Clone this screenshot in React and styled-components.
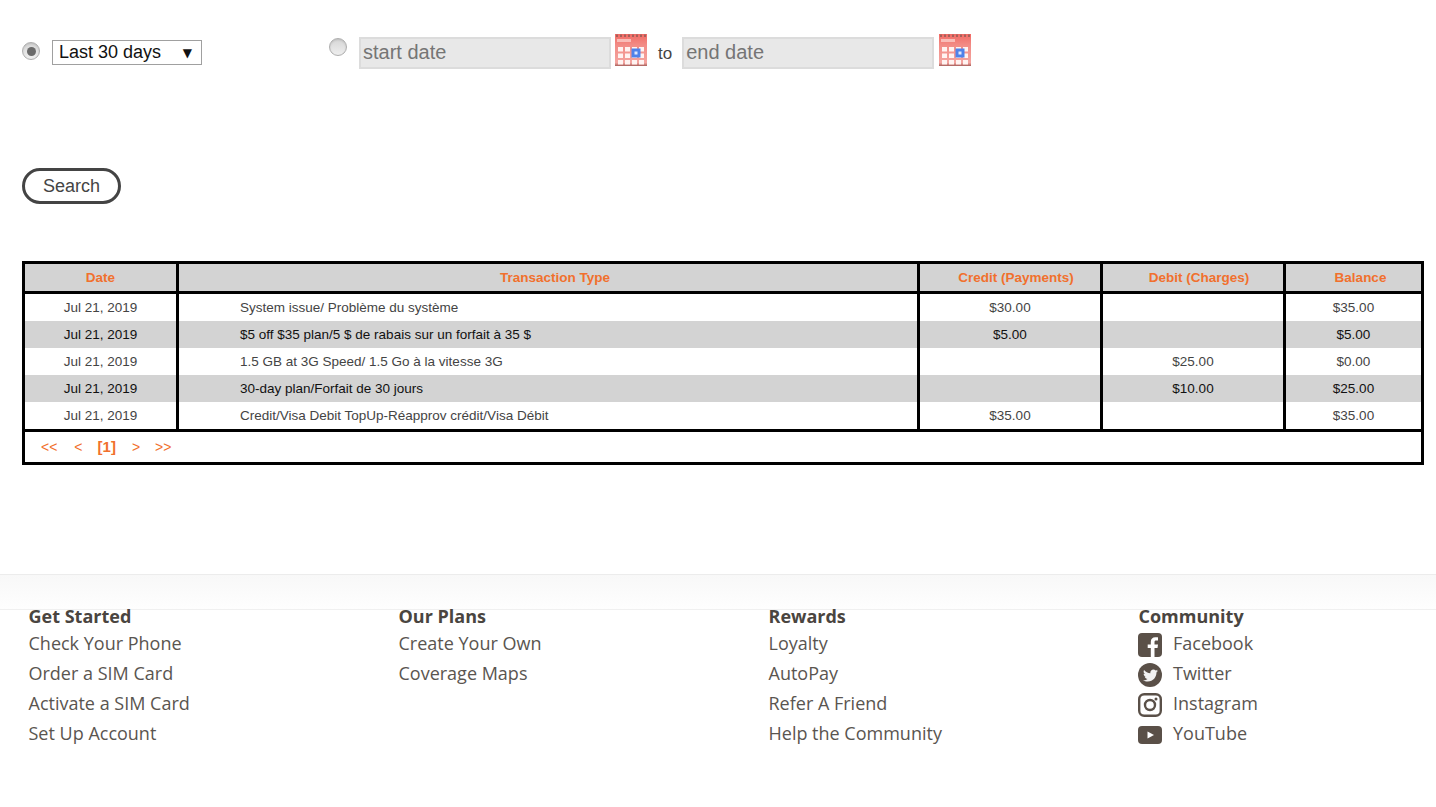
import React from 'react';
import styled, { createGlobalStyle } from 'styled-components';
import { FaTwitter } from 'react-icons/fa';

const Global = createGlobalStyle`
  html, body { margin: 0; padding: 0; background: #fff; }
  body { font-family: "Liberation Sans", Arial, sans-serif; }
`;

const Page = styled.div`
  width: 1436px;
  height: 807px;
  overflow: hidden;
`;
const Content = styled.main`
  height: 574px;
  padding: 34px 12px 0 22px;
  box-sizing: border-box;
`;
const FilterRow = styled.div`
  display: flex;
  align-items: flex-start;
  height: 134px;
`;
const Radio = styled.span`
  width: 18px;
  height: 18px;
  box-sizing: border-box;
  border-radius: 50%;
  border: 1px solid #aeaeae;
  background: linear-gradient(#d6d6d6, #eeeeee);
  box-shadow: inset 0 1px 2px rgba(0, 0, 0, 0.12);
  margin-top: ${p => p.$top}px;
  margin-right: ${p => p.$right}px;
  display: flex;
  align-items: center;
  justify-content: center;
  flex: none;
  &::after {
    content: '';
    display: ${p => (p.$checked ? 'block' : 'none')};
    width: 9px;
    height: 9px;
    border-radius: 50%;
    background: #6a6a6a;
  }
`;
const Select = styled.div`
  width: 150px;
  height: 25px;
  box-sizing: border-box;
  margin-top: 6px;
  margin-right: 127px;
  border: 1px solid #a0a0a0;
  padding: 0 9px 0 6px;
  display: flex;
  align-items: center;
  justify-content: space-between;
  font-size: 18px;
  color: #111;
`;
const Arrow = styled.span`
  font-family: "DejaVu Sans", sans-serif;
  font-size: 12px;
  color: #111;
`;
const DateInput = styled.div`
  width: 252px;
  height: 32px;
  box-sizing: border-box;
  margin-top: 3px;
  border: 2px solid #dcdcdc;
  background: #e8e8e8;
  padding: 0 0 2px 2px;
  display: flex;
  align-items: center;
  font-size: 20px;
  color: #757575;
`;
const To = styled.span`
  font-size: 17px;
  color: #444;
  margin: 10px 10px 0 11px;
  line-height: 20px;
`;
const CalendarSvg = styled.svg`
  display: block;
  flex: none;
  width: 32px;
  height: 32px;
  margin-left: ${p => p.$left}px;
`;
const SearchButton = styled.button`
  display: block;
  width: 99px;
  height: 36px;
  box-sizing: border-box;
  border: 3px solid #444;
  border-radius: 18px;
  background: #fff;
  padding: 0;
  font-family: inherit;
  font-size: 18px;
  color: #444;
`;
const TableBox = styled.table`
  margin-top: 57px;
  width: 1402px;
  table-layout: fixed;
  border-collapse: separate;
  border-spacing: 0;
  border: 3px solid #000;
  font-size: 13.5px;
`;
const HeadCell = styled.th`
  height: 30px;
  padding: 0 0 0 ${p => p.$shift || 0}px;
  box-sizing: border-box;
  background: #d3d3d3;
  border-bottom: 3px solid #000;
  border-right: ${p => (p.$last ? 0 : '3px solid #000')};
  color: #f1702d;
  font-size: 13.5px;
  font-weight: bold;
  text-align: center;
`;
const Cell = styled.td`
  height: 27px;
  box-sizing: border-box;
  padding: 0 0 0 ${p => p.$indent || 0}px;
  background: ${p => (p.$shade ? '#d3d3d3' : '#fff')};
  color: ${p => (p.$shade ? '#111' : '#444')};
  border-right: ${p => (p.$last ? 0 : '3px solid #000')};
  text-align: ${p => (p.$indent ? 'left' : 'center')};
`;
const PagerCell = styled.td`
  height: 33px;
  box-sizing: border-box;
  padding: 0 0 1px;
  border-top: 3px solid #000;
`;
const Pager = styled.div`
  display: flex;
  align-items: center;
  padding-left: 16px;
  color: #f1702d;
  font-size: 14px;
`;
const PageLink = styled.span`
  margin-right: ${p => p.$gap}px;
`;
const PageCurrent = styled.span`
  font-weight: bold;
  font-size: 15px;
  margin-right: 16px;
`;
const Band = styled.div`
  height: 36px;
  box-sizing: border-box;
  border-top: 1px solid #ececec;
  border-bottom: 1px solid #f0f0f0;
  background: linear-gradient(#f8f8f8, #fefefe);
`;
const Footer = styled.footer`
  display: grid;
  grid-template-columns: repeat(4, 370px);
  padding-left: 28.5px;
  margin-top: -7px;
  font-family: "Open Sans", sans-serif;
  font-size: 18px;
  color: #5a5550;
`;
const FootCol = styled.div`
  display: flex;
  flex-direction: column;
`;
const FootTitle = styled.div`
  font-weight: bold;
  color: #4a4540;
  line-height: 27px;
  height: 25px;
`;
const FootLink = styled.div`
  line-height: 30px;
  height: 30px;
  display: flex;
  align-items: center;
`;
const IconSlot = styled.span`
  width: 24px;
  height: 24px;
  margin: 4px 11px 0 -0.5px;
  flex: none;
  display: flex;
  align-items: center;
  justify-content: center;
`;
const IconSvg = styled.svg`
  display: block;
  width: 24px;
  height: 24px;
`;
const TwitterDisc = styled.span`
  width: 24px;
  height: 24px;
  border-radius: 50%;
  background: #5a5048;
  color: #f2f2f2;
  display: flex;
  align-items: center;
  justify-content: center;
  font-size: 15px;
`;

const Calendar = ({ left, id }) => {
  const cols = [3, 10, 17, 24];
  const rows = [13, 19.5, 26];
  const dots = [2, 6, 10, 14, 18, 22, 26, 30];
  return (
    <CalendarSvg $left={left} viewBox="0 0 32 32">
      <defs>
        <linearGradient id={id} x1="0" y1="0" x2="0" y2="1">
          <stop offset="0" stopColor="#f26a64" />
          <stop offset="0.35" stopColor="#f28c86" />
          <stop offset="0.9" stopColor="#f4a5a0" />
          <stop offset="1" stopColor="#a8605c" />
        </linearGradient>
        <filter id={`${id}-soft`} x="0" y="0" width="100%" height="100%">
          <feGaussianBlur stdDeviation="0.55" />
        </filter>
      </defs>
      <rect width="32" height="32" fill={`url(#${id})`} />
      <g filter={`url(#${id}-soft)`}>
        {dots.map(x => <rect key={x} x={x - 1} y="0.5" width="2" height="2.5" fill="#a5605a" />)}
        <rect x="2" y="5" width="14" height="3" fill="#f9bdb8" />
        {rows.map(y =>
          cols.map(x => <rect key={`${x}-${y}`} x={x} y={y} width="5" height="4.5" fill="#fff3f1" />)
        )}
        <rect x="16.5" y="14.5" width="9" height="9" fill="#4f82ea" />
        <rect x="19.5" y="17.5" width="3" height="3" fill="#dfe8fb" />
      </g>
    </CalendarSvg>
  );
};

const rows = [
  ['System issue/ Problème du système', '$30.00', '', '$35.00'],
  ['$5 off $35 plan/5 $ de rabais sur un forfait à 35 $', '$5.00', '', '$5.00'],
  ['1.5 GB at 3G Speed/ 1.5 Go à la vitesse 3G', '', '$25.00', '$0.00'],
  ['30-day plan/Forfait de 30 jours', '', '$10.00', '$25.00'],
  ['Credit/Visa Debit TopUp-Réapprov crédit/Visa Débit', '$35.00', '', '$35.00'],
];

const ICON = '#5a5048';
const socials = [
  {
    name: 'Facebook',
    icon: (
      <IconSvg viewBox="0 0 24 24">
        <rect width="24" height="24" rx="4" fill={ICON} />
        <path fill="#fff" d="M16.5 24v-9h3l.5-3.5h-3.5V9.3c0-1 .3-1.7 1.8-1.7H20V4.4c-.3 0-1.4-.1-2.7-.1-2.7 0-4.5 1.6-4.5 4.6v2.6H9.7V15h3.1v9z" />
      </IconSvg>
    ),
  },
  {
    name: 'Twitter',
    icon: (
      <TwitterDisc>
        <FaTwitter />
      </TwitterDisc>
    ),
  },
  {
    name: 'Instagram',
    icon: (
      <IconSvg viewBox="0 0 24 24">
        <rect x="1.2" y="1.2" width="21.6" height="21.6" rx="5" fill="none" stroke={ICON} strokeWidth="2.4" />
        <circle cx="12" cy="12" r="5" fill="none" stroke={ICON} strokeWidth="2.4" />
        <circle cx="18" cy="6" r="1.5" fill={ICON} />
      </IconSvg>
    ),
  },
  {
    name: 'YouTube',
    icon: (
      <IconSvg viewBox="0 0 24 24">
        <rect x="0" y="3" width="24" height="18" rx="4" fill={ICON} />
        <path fill="#fff" d="M9.5 8.5l6.5 3.5-6.5 3.5z" />
      </IconSvg>
    ),
  },
];

const columns = [
  { title: 'Get Started', links: ['Check Your Phone', 'Order a SIM Card', 'Activate a SIM Card', 'Set Up Account'] },
  { title: 'Our Plans', links: ['Create Your Own', 'Coverage Maps'] },
  { title: 'Rewards', links: ['Loyalty', 'AutoPay', 'Refer A Friend', 'Help the Community'] },
];

export default function App() {
  return (
    <Page>
      <Global />
      <Content>
        <FilterRow>
          <Radio $checked $top={8} $right={12} />
          <Select>
            Last 30 days
            <Arrow>▼</Arrow>
          </Select>
          <Radio $top={4} $right={12} />
          <DateInput>start date</DateInput>
          <Calendar left={4} id="calA" />
          <To>to</To>
          <DateInput>end date</DateInput>
          <Calendar left={5} id="calB" />
        </FilterRow>
        <SearchButton>Search</SearchButton>
        <TableBox>
          <colgroup>
            <col style={{ width: 154 }} />
            <col style={{ width: 741 }} />
            <col style={{ width: 183 }} />
            <col style={{ width: 183 }} />
            <col style={{ width: 135 }} />
          </colgroup>
          <thead>
            <tr>
              <HeadCell>Date</HeadCell>
              <HeadCell $shift={14}>Transaction Type</HeadCell>
              <HeadCell $shift={12}>Credit (Payments)</HeadCell>
              <HeadCell $shift={12}>Debit (Charges)</HeadCell>
              <HeadCell $shift={14} $last>Balance</HeadCell>
            </tr>
          </thead>
          <tbody>
            {rows.map((r, i) => (
              <tr key={i}>
                <Cell $shade={i % 2 === 1}>Jul 21, 2019</Cell>
                <Cell $shade={i % 2 === 1} $indent={61}>{r[0]}</Cell>
                <Cell $shade={i % 2 === 1}>{r[1]}</Cell>
                <Cell $shade={i % 2 === 1}>{r[2]}</Cell>
                <Cell $shade={i % 2 === 1} $last>{r[3]}</Cell>
              </tr>
            ))}
            <tr>
              <PagerCell colSpan={5}>
                <Pager>
                  <PageLink $gap={17}>&lt;&lt;</PageLink>
                  <PageLink $gap={15}>&lt;</PageLink>
                  <PageCurrent>[1]</PageCurrent>
                  <PageLink $gap={15}>&gt;</PageLink>
                  <PageLink $gap={0}>&gt;&gt;</PageLink>
                </Pager>
              </PagerCell>
            </tr>
          </tbody>
        </TableBox>
      </Content>
      <Band />
      <Footer>
        {columns.map(c => (
          <FootCol key={c.title}>
            <FootTitle>{c.title}</FootTitle>
            {c.links.map(l => <FootLink key={l}>{l}</FootLink>)}
          </FootCol>
        ))}
        <FootCol>
          <FootTitle>Community</FootTitle>
          {socials.map(s => (
            <FootLink key={s.name}>
              <IconSlot>{s.icon}</IconSlot>
              {s.name}
            </FootLink>
          ))}
        </FootCol>
      </Footer>
    </Page>
  );
}
